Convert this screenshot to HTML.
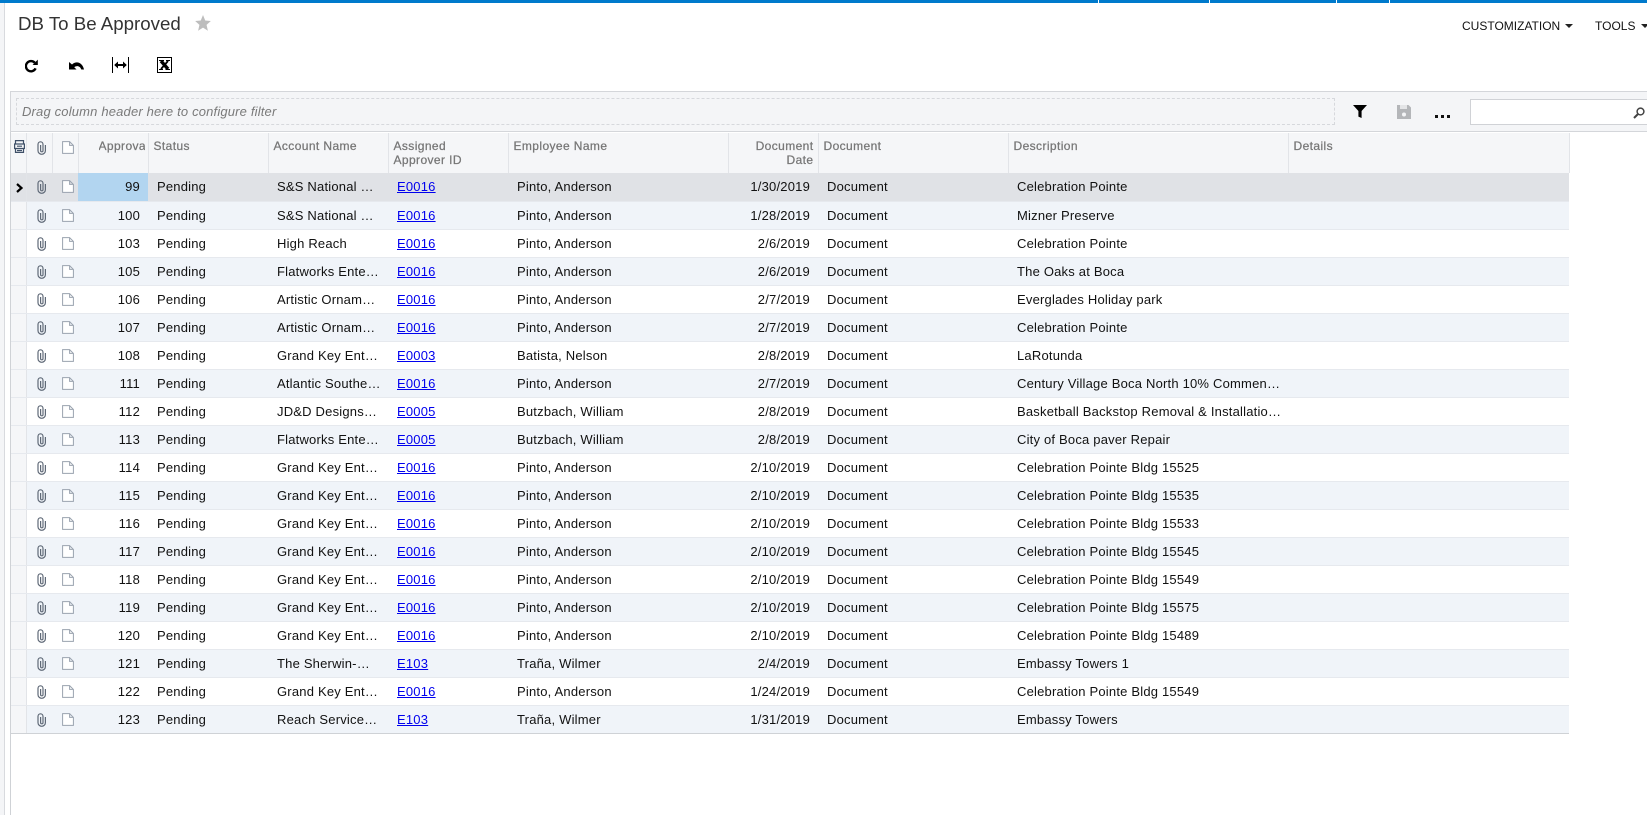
<!DOCTYPE html>
<html><head><meta charset="utf-8"><title>DB To Be Approved</title>
<style>
html,body{margin:0;padding:0;background:#fff;width:1647px;height:815px;overflow:hidden}
body{font-family:"Liberation Sans",Arial,sans-serif;position:relative}
.a{position:absolute}
.tick{position:absolute;top:0;width:1px;height:3px;background:#fff}
table{position:absolute;left:11px;top:133px;border-collapse:collapse;table-layout:fixed;width:1558px}
th{height:40px;padding:6px 0 0 5px;box-sizing:border-box;background:#f5f6f8;color:#767676;font-size:12px;font-weight:normal;letter-spacing:.4px;line-height:14px;text-align:left;vertical-align:top;border-right:1px solid #e2e4e8;overflow:hidden;-webkit-text-stroke:.25px #767676}
th.r{text-align:right;padding:6px 4px 0 0}
th.p{padding:0;position:relative}
td{height:28px;padding:1px 0 0 9px;box-sizing:border-box;font-size:13px;letter-spacing:.2px;color:#111;white-space:nowrap;overflow:hidden;border-bottom:1px solid #e6e9ee;vertical-align:middle;line-height:26px}
td.r{text-align:right;padding:1px 8px 0 0}
td.g{background:#f5f6f8;border-right:1px solid #e2e4e8;padding:0;position:relative}
td.i{padding:0;position:relative}
tr:nth-child(even) td{background:#f0f4f9}
tr:nth-child(even) td.g{background:#f5f6f8}
tr.s td,tr.s td.g{background:#e0e2e6}
tr.s td.n{background:#b2d5f0}
tr.l td{border-bottom:1px solid #cfd2d6}
a{color:#0000ee;text-decoration:underline}
svg{display:block}
td.i svg,th svg{position:absolute}
svg.c{left:10px;top:7px;width:10px;height:14px}
svg.d{left:10px;top:7px;width:12px;height:13px}
</style></head><body>
<svg width="0" height="0" style="position:absolute"><defs>
<symbol id="c" viewBox="0 0 10 14"><path d="M8.400 4V9.600A3.700 3.700 0 0 1 1 9.600V3.400A2.500 2.600 0 0 1 6 3.400V9.600A1.200 1.200 0 0 1 3.600 9.600V4" fill="none" stroke="#5f6977" stroke-width="1.200"/></symbol>
<symbol id="d" viewBox="0 0 12 13"><path d="M.6.6H7.6L11.4 4.4V12.4H.6Z M7.6.6V4.4H11.4" fill="#fff" stroke="#9aa3af" stroke-width="1"/></symbol>
</defs></svg>

<div class="a" style="left:0;top:0;width:1647px;height:3px;background:#007acc"></div>
<div class="tick" style="left:1098px"></div><div class="tick" style="left:1209px"></div><div class="tick" style="left:1336px"></div><div class="tick" style="left:1389px"></div>
<div class="a" style="left:0;top:3px;width:4px;height:812px;background:#f4f5f7;border-right:1px solid #d8dade"></div>
<div class="a" style="left:10px;top:91px;width:1px;height:724px;background:#cfd2d6"></div>

<div class="a" style="left:18px;top:11px;font-size:18.7px;line-height:26px;color:#333;white-space:nowrap">DB To Be Approved</div>
<svg class="a" style="left:195px;top:15px" width="16" height="16" viewBox="0 0 18 17" preserveAspectRatio="none"><path d="M9 0L11.5 5.9 17.8 6.4 13 10.5 14.5 16.8 9 13.4 3.5 16.8 5 10.5.2 6.4 6.5 5.9Z" fill="#bdbdbd"/></svg>

<div class="a" style="left:1462px;top:18px;font-size:12px;line-height:16px;color:#111;white-space:nowrap">CUSTOMIZATION</div>
<div class="a" style="left:1565px;top:24px;border:4px solid transparent;border-top-color:#222;border-bottom:0"></div>
<div class="a" style="left:1595px;top:18px;font-size:12px;line-height:16px;color:#111;white-space:nowrap">TOOLS</div>
<div class="a" style="left:1641px;top:24px;border:4px solid transparent;border-top-color:#222;border-bottom:0"></div>

<svg class="a" style="left:25px;top:59px" width="13" height="14" viewBox="0 0 13 14"><path d="M10.600 9.400A5.100 5.100 0 1 1 9.800 3.800" fill="none" stroke="#000" stroke-width="2.400"/><path d="M7.600 6H12.800V.6Z" fill="#000"/></svg>
<svg class="a" style="left:69px;top:61px" width="15" height="9" viewBox="0 0 15 9"><path d="M0 1V8.500H7.500L5.200 6.100C7.800 4.300 11 4.700 12.300 8.500H15C13.800 2.400 8 -1 3 3.500Z" fill="#000"/></svg>
<svg class="a" style="left:112px;top:57px" width="17" height="16" viewBox="0 0 17 16"><path d="M.5 0V16M16.500 0V16" stroke="#000" stroke-width="1"/><path d="M3 8H14" stroke="#000" stroke-width="2"/><path d="M2.200 8L6 4.500V11.500ZM14.800 8L11 4.500V11.500Z" fill="#000"/></svg>
<svg class="a" style="left:157px;top:57px" width="15" height="16" viewBox="0 0 15 16"><rect x=".5" y=".5" width="14" height="15" fill="#fff" stroke="#000"/><path d="M4 4L11 12" stroke="#000" stroke-width="3.400"/><path d="M11 4L4 12" stroke="#000" stroke-width="1.800"/><path d="M2 3.500H7M9 3.500H13M2 12.500H6M8.500 12.500H13" stroke="#000" stroke-width="1"/></svg>

<div class="a" style="left:10px;top:91px;width:1637px;height:41px;box-sizing:border-box;background:#f4f5f7;border-top:1px solid #d4d6da;border-bottom:1px solid #d4d6da;border-left:1px solid #d4d6da"></div>
<div class="a" style="left:16px;top:98px;width:1319px;height:27px;box-sizing:border-box;border:1px dashed #d6d8dc;font-size:13px;font-style:italic;letter-spacing:.17px;color:#7a7a7a;line-height:25px;padding-left:5px">Drag column header here to configure filter</div>
<svg class="a" style="left:1353px;top:105px" width="14" height="13" viewBox="0 0 15 14" preserveAspectRatio="none"><path d="M0 0H15L9.200 6.500V14L5.800 12.500V6.500Z" fill="#000"/></svg>
<svg class="a" style="left:1397px;top:105px" width="14" height="14" viewBox="0 0 14 14"><path d="M0 0H11.500L14 2.500V14H0Z" fill="#b4b6b9"/><rect x="3" y="0" width="7" height="4" fill="#e4e5e7"/><circle cx="7" cy="9.500" r="2" fill="#f4f5f7"/></svg>
<div class="a" style="left:1435px;top:115px;width:3px;height:3px;background:#111"></div>
<div class="a" style="left:1441px;top:115px;width:3px;height:3px;background:#111"></div>
<div class="a" style="left:1447px;top:115px;width:3px;height:3px;background:#111"></div>
<div class="a" style="left:1470px;top:99px;width:177px;height:26px;box-sizing:border-box;background:#fff;border:1px solid #d0d2d6;border-right:0"></div>
<svg class="a" style="left:1633px;top:107px" width="12" height="12" viewBox="0 0 12 12"><circle cx="7.500" cy="4.500" r="3.400" fill="none" stroke="#444" stroke-width="1.500"/><path d="M5 7L1 11" stroke="#444" stroke-width="2"/></svg>

<table>
<colgroup><col style="width:15px"><col style="width:26px"><col style="width:26px"><col style="width:70px"><col style="width:120px"><col style="width:120px"><col style="width:120px"><col style="width:220px"><col style="width:90px"><col style="width:190px"><col style="width:280px"><col style="width:281px"></colgroup>
<thead><tr>
<th class="p"><svg style="left:3px;top:7px" width="11" height="13" viewBox="0 0 11 13"><path d="M1.500.6H9.500V4H1.500ZM.6 4H10.400V8.500H.6ZM1.500 8.500H9.500V12.400H1.500ZM3 6.200H8M3 10.500H8" fill="none" stroke="#3f5068" stroke-width="1.200"/></svg></th>
<th class="p"><svg class="c" style="top:8px"><use href="#c"/></svg></th>
<th class="p"><svg class="d" style="left:9px;top:8px"><use href="#d"/></svg></th>
<th style="padding:6px 0 0 20px;white-space:nowrap"><div style="width:46px;overflow:hidden">Approval</div></th><th>Status</th><th>Account Name</th><th>Assigned<br>Approver ID</th><th>Employee Name</th><th class="r">Document<br>Date</th><th>Document</th><th>Description</th><th>Details</th>
</tr></thead>
<tbody>
<tr class="s"><td class="g"><svg style="position:absolute;left:5px;top:10px" width="7" height="10" viewBox="0 0 7 10"><path d="M1 1L5.500 5 1 9" fill="none" stroke="#000" stroke-width="2.200"/></svg></td><td class="i"><svg class="c"><use href="#c"/></svg></td><td class="i"><svg class="d"><use href="#d"/></svg></td><td class="r n">99</td><td>Pending</td><td>S&amp;S National …</td><td><a>E0016</a></td><td>Pinto, Anderson</td><td class="r">1/30/2019</td><td>Document</td><td>Celebration Pointe</td><td></td></tr>
<tr><td class="g"></td><td class="i"><svg class="c"><use href="#c"/></svg></td><td class="i"><svg class="d"><use href="#d"/></svg></td><td class="r">100</td><td>Pending</td><td>S&amp;S National …</td><td><a>E0016</a></td><td>Pinto, Anderson</td><td class="r">1/28/2019</td><td>Document</td><td>Mizner Preserve</td><td></td></tr>
<tr><td class="g"></td><td class="i"><svg class="c"><use href="#c"/></svg></td><td class="i"><svg class="d"><use href="#d"/></svg></td><td class="r">103</td><td>Pending</td><td>High Reach</td><td><a>E0016</a></td><td>Pinto, Anderson</td><td class="r">2/6/2019</td><td>Document</td><td>Celebration Pointe</td><td></td></tr>
<tr><td class="g"></td><td class="i"><svg class="c"><use href="#c"/></svg></td><td class="i"><svg class="d"><use href="#d"/></svg></td><td class="r">105</td><td>Pending</td><td>Flatworks Ente…</td><td><a>E0016</a></td><td>Pinto, Anderson</td><td class="r">2/6/2019</td><td>Document</td><td>The Oaks at Boca</td><td></td></tr>
<tr><td class="g"></td><td class="i"><svg class="c"><use href="#c"/></svg></td><td class="i"><svg class="d"><use href="#d"/></svg></td><td class="r">106</td><td>Pending</td><td>Artistic Ornam…</td><td><a>E0016</a></td><td>Pinto, Anderson</td><td class="r">2/7/2019</td><td>Document</td><td>Everglades Holiday park</td><td></td></tr>
<tr><td class="g"></td><td class="i"><svg class="c"><use href="#c"/></svg></td><td class="i"><svg class="d"><use href="#d"/></svg></td><td class="r">107</td><td>Pending</td><td>Artistic Ornam…</td><td><a>E0016</a></td><td>Pinto, Anderson</td><td class="r">2/7/2019</td><td>Document</td><td>Celebration Pointe</td><td></td></tr>
<tr><td class="g"></td><td class="i"><svg class="c"><use href="#c"/></svg></td><td class="i"><svg class="d"><use href="#d"/></svg></td><td class="r">108</td><td>Pending</td><td>Grand Key Ent…</td><td><a>E0003</a></td><td>Batista, Nelson</td><td class="r">2/8/2019</td><td>Document</td><td>LaRotunda</td><td></td></tr>
<tr><td class="g"></td><td class="i"><svg class="c"><use href="#c"/></svg></td><td class="i"><svg class="d"><use href="#d"/></svg></td><td class="r">111</td><td>Pending</td><td>Atlantic Southe…</td><td><a>E0016</a></td><td>Pinto, Anderson</td><td class="r">2/7/2019</td><td>Document</td><td>Century Village Boca North 10% Commen…</td><td></td></tr>
<tr><td class="g"></td><td class="i"><svg class="c"><use href="#c"/></svg></td><td class="i"><svg class="d"><use href="#d"/></svg></td><td class="r">112</td><td>Pending</td><td>JD&amp;D Designs…</td><td><a>E0005</a></td><td>Butzbach, William</td><td class="r">2/8/2019</td><td>Document</td><td>Basketball Backstop Removal &amp; Installatio…</td><td></td></tr>
<tr><td class="g"></td><td class="i"><svg class="c"><use href="#c"/></svg></td><td class="i"><svg class="d"><use href="#d"/></svg></td><td class="r">113</td><td>Pending</td><td>Flatworks Ente…</td><td><a>E0005</a></td><td>Butzbach, William</td><td class="r">2/8/2019</td><td>Document</td><td>City of Boca paver Repair</td><td></td></tr>
<tr><td class="g"></td><td class="i"><svg class="c"><use href="#c"/></svg></td><td class="i"><svg class="d"><use href="#d"/></svg></td><td class="r">114</td><td>Pending</td><td>Grand Key Ent…</td><td><a>E0016</a></td><td>Pinto, Anderson</td><td class="r">2/10/2019</td><td>Document</td><td>Celebration Pointe Bldg 15525</td><td></td></tr>
<tr><td class="g"></td><td class="i"><svg class="c"><use href="#c"/></svg></td><td class="i"><svg class="d"><use href="#d"/></svg></td><td class="r">115</td><td>Pending</td><td>Grand Key Ent…</td><td><a>E0016</a></td><td>Pinto, Anderson</td><td class="r">2/10/2019</td><td>Document</td><td>Celebration Pointe Bldg 15535</td><td></td></tr>
<tr><td class="g"></td><td class="i"><svg class="c"><use href="#c"/></svg></td><td class="i"><svg class="d"><use href="#d"/></svg></td><td class="r">116</td><td>Pending</td><td>Grand Key Ent…</td><td><a>E0016</a></td><td>Pinto, Anderson</td><td class="r">2/10/2019</td><td>Document</td><td>Celebration Pointe Bldg 15533</td><td></td></tr>
<tr><td class="g"></td><td class="i"><svg class="c"><use href="#c"/></svg></td><td class="i"><svg class="d"><use href="#d"/></svg></td><td class="r">117</td><td>Pending</td><td>Grand Key Ent…</td><td><a>E0016</a></td><td>Pinto, Anderson</td><td class="r">2/10/2019</td><td>Document</td><td>Celebration Pointe Bldg 15545</td><td></td></tr>
<tr><td class="g"></td><td class="i"><svg class="c"><use href="#c"/></svg></td><td class="i"><svg class="d"><use href="#d"/></svg></td><td class="r">118</td><td>Pending</td><td>Grand Key Ent…</td><td><a>E0016</a></td><td>Pinto, Anderson</td><td class="r">2/10/2019</td><td>Document</td><td>Celebration Pointe Bldg 15549</td><td></td></tr>
<tr><td class="g"></td><td class="i"><svg class="c"><use href="#c"/></svg></td><td class="i"><svg class="d"><use href="#d"/></svg></td><td class="r">119</td><td>Pending</td><td>Grand Key Ent…</td><td><a>E0016</a></td><td>Pinto, Anderson</td><td class="r">2/10/2019</td><td>Document</td><td>Celebration Pointe Bldg 15575</td><td></td></tr>
<tr><td class="g"></td><td class="i"><svg class="c"><use href="#c"/></svg></td><td class="i"><svg class="d"><use href="#d"/></svg></td><td class="r">120</td><td>Pending</td><td>Grand Key Ent…</td><td><a>E0016</a></td><td>Pinto, Anderson</td><td class="r">2/10/2019</td><td>Document</td><td>Celebration Pointe Bldg 15489</td><td></td></tr>
<tr><td class="g"></td><td class="i"><svg class="c"><use href="#c"/></svg></td><td class="i"><svg class="d"><use href="#d"/></svg></td><td class="r">121</td><td>Pending</td><td>The Sherwin-…</td><td><a>E103</a></td><td>Traña, Wilmer</td><td class="r">2/4/2019</td><td>Document</td><td>Embassy Towers 1</td><td></td></tr>
<tr><td class="g"></td><td class="i"><svg class="c"><use href="#c"/></svg></td><td class="i"><svg class="d"><use href="#d"/></svg></td><td class="r">122</td><td>Pending</td><td>Grand Key Ent…</td><td><a>E0016</a></td><td>Pinto, Anderson</td><td class="r">1/24/2019</td><td>Document</td><td>Celebration Pointe Bldg 15549</td><td></td></tr>
<tr class="l"><td class="g"></td><td class="i"><svg class="c"><use href="#c"/></svg></td><td class="i"><svg class="d"><use href="#d"/></svg></td><td class="r">123</td><td>Pending</td><td>Reach Service…</td><td><a>E103</a></td><td>Traña, Wilmer</td><td class="r">1/31/2019</td><td>Document</td><td>Embassy Towers</td><td></td></tr>
</tbody></table>
</body></html>
